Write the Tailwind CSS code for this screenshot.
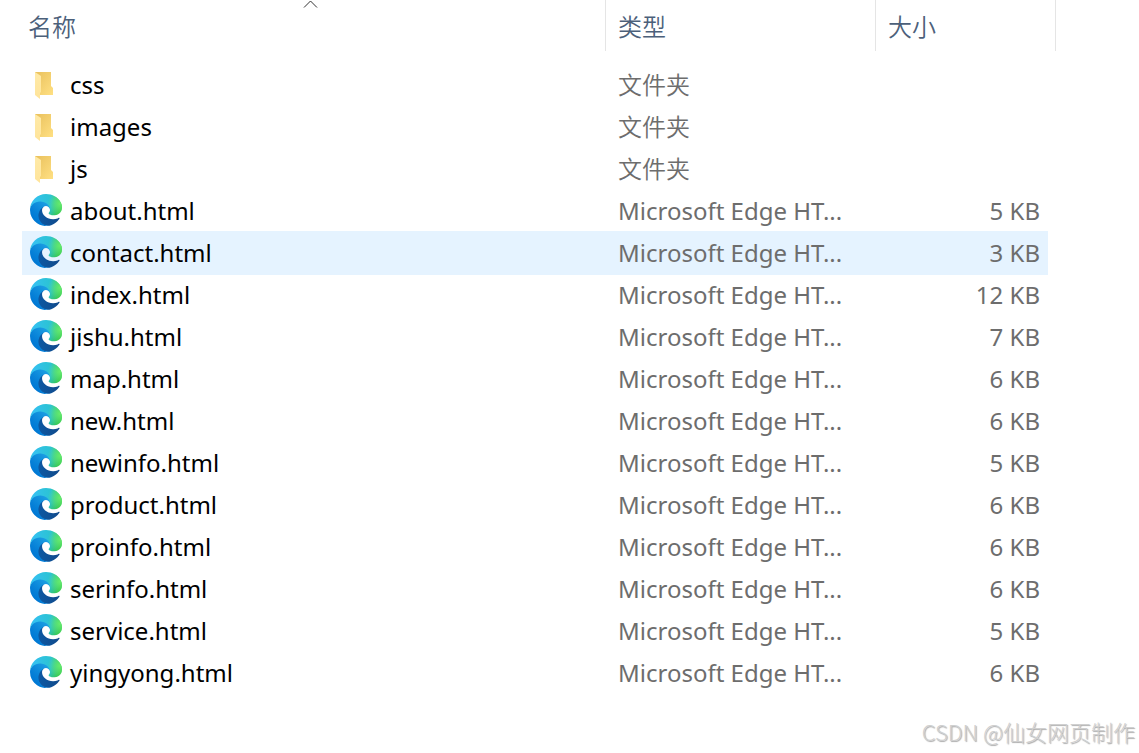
<!DOCTYPE html>
<html lang="zh-Hans">
<head>
    <meta charset="UTF-8">
    <meta name="viewport" content="width=device-width, initial-scale=1.0">
    <title>文件列表</title>
    <script src="https://cdn.jsdelivr.net/npm/@tailwindcss/browser@4"></script>
</head>
<body class="bg-white min-h-screen relative font-['Noto_Sans','Noto_Sans_CJK_SC',sans-serif] text-[24px] leading-[42px] text-[#6d6d6d]">
    <svg class="absolute w-0 h-0" aria-hidden="true">
        <defs>
            <linearGradient id="folderBack" x1="0" y1="0" x2="1" y2="1">
                <stop offset="0" stop-color="#e9c05c"/>
                <stop offset="1" stop-color="#ffe083"/>
            </linearGradient>
            <linearGradient id="folderFront" x1="0" y1="0" x2="0" y2="1">
                <stop offset="0" stop-color="#ffeaa8"/>
                <stop offset="1" stop-color="#ffe49a"/>
            </linearGradient>
            <linearGradient id="edgeDark" x1="63" y1="177" x2="241" y2="177" gradientUnits="userSpaceOnUse">
                <stop offset="0" stop-color="#0c59a4"/>
                <stop offset="1" stop-color="#114a8b"/>
            </linearGradient>
            <linearGradient id="edgeBlue" x1="157" y1="105" x2="46" y2="226" gradientUnits="userSpaceOnUse">
                <stop offset="0" stop-color="#1b9de2"/>
                <stop offset=".16" stop-color="#1595df"/>
                <stop offset=".67" stop-color="#0680d7"/>
                <stop offset="1" stop-color="#0078d4"/>
            </linearGradient>
            <radialGradient id="edgeTeal" cx="0" cy="0" r="1" gradientUnits="userSpaceOnUse" gradientTransform="matrix(225 0 0 225 30 52)">
                <stop offset="0" stop-color="#35c1f1"/>
                <stop offset=".11" stop-color="#34c1ed"/>
                <stop offset=".35" stop-color="#2fc2df"/>
                <stop offset=".65" stop-color="#2bc3d2"/>
                <stop offset="1" stop-color="#36c752"/>
            </radialGradient>
            <radialGradient id="edgeGreen" cx="244" cy="82" r="97" gradientUnits="userSpaceOnUse">
                <stop offset="0" stop-color="#66eb6e"/>
                <stop offset="1" stop-color="#66eb6e" stop-opacity="0"/>
            </radialGradient>
        </defs>
        <symbol id="folder" viewBox="0 0 32 32">
            <path fill="url(#folderBack)" d="M5 4h16v14l2 2v7H5z"/>
            <path fill="url(#folderFront)" d="M5 4l6 4v16l-1 1v6l-5-4z"/>
        </symbol>
        <symbol id="edge" viewBox="4.6 4.9 256 256">
            <path fill="url(#edgeDark)" d="M235.68 195.46a93.73 93.73 0 0 1-10.54 4.71 101.87 101.87 0 0 1-35.9 6.46c-47.32 0-88.54-32.55-88.54-74.32A31.48 31.48 0 0 1 117.13 105c-42.8 1.8-53.8 46.4-53.8 72.53 0 73.88 68.09 81.37 82.76 81.37 7.91 0 19.84-2.3 27-4.56l1.31-.44A128.34 128.34 0 0 0 241 201.1a4 4 0 0 0-5.32-5.64z"/>
            <path fill="url(#edgeBlue)" d="M110.34 246.34A79.2 79.2 0 0 1 87.6 225a80.72 80.72 0 0 1 29.53-120c3.12-1.47 8.45-4.13 15.54-4a32.35 32.35 0 0 1 25.69 13 31.88 31.88 0 0 1 6.36 18.66c0-.21 24.46-79.6-80-79.6-43.9 0-80 41.66-80 78.21a130.15 130.15 0 0 0 12.11 56 128 128 0 0 0 156.38 67.11 75.55 75.55 0 0 1-62.78-8z"/>
            <path fill="url(#edgeTeal)" d="M156.94 153.78c-.81 1.05-3.3 2.5-3.3 5.66 0 2.61 1.7 5.12 4.72 7.23 14.38 10 41.49 8.68 41.56 8.68A59.56 59.56 0 0 0 230.19 167a61.38 61.38 0 0 0 30.43-52.88c.26-22.41-8-37.31-11.34-43.91C228.09 28.76 182.35 4.92 132.61 4.92a128 128 0 0 0-128 126.2c.48-36.54 36.8-66.05 80-66.05 3.5 0 23.46.34 42 10.07 16.34 8.58 24.9 18.94 30.85 29.21 6.18 10.67 7.28 24.15 7.28 29.52S162 147.2 156.94 153.78z"/>
            <path fill="url(#edgeGreen)" d="M156.94 153.78c-.81 1.05-3.3 2.5-3.3 5.66 0 2.61 1.7 5.12 4.72 7.23 14.38 10 41.49 8.68 41.56 8.68A59.56 59.56 0 0 0 230.19 167a61.38 61.38 0 0 0 30.43-52.88c.26-22.41-8-37.31-11.34-43.91C228.09 28.76 182.35 4.92 132.61 4.92a128 128 0 0 0-128 126.2c.48-36.54 36.8-66.05 80-66.05 3.5 0 23.46.34 42 10.07 16.34 8.58 24.9 18.94 30.85 29.21 6.18 10.67 7.28 24.15 7.28 29.52S162 147.2 156.94 153.78z"/>
        </symbol>
    </svg>

    <div class="pl-[22px] pr-[83px]">
        <table class="w-full table-fixed border-separate border-spacing-0">
            <colgroup>
                <col>
                <col class="w-[270px]">
                <col class="w-[173px]">
                <col class="w-2">
            </colgroup>
            <thead class="text-[#4c607a]">
                <tr class="h-[51px]">
                    <th class="relative p-0 pt-0.5 pl-1.5 text-left font-[350]">
                        名称
                        <svg class="absolute top-0 left-1/2 -ml-3 w-4 h-2" viewBox="0 0 16 8" fill="none" stroke="#333"><path d="M2 7.500l6.500-6.500 6.500 6.500"/></svg>
                    </th>
                    <th class="p-0 pt-0.5 pl-3 border-l border-[#e5e5e5] text-left font-[350]">类型</th>
                    <th colspan="2" class="p-0 pt-0.5 pl-3 border-x border-[#e5e5e5] text-left font-[350]">大小</th>
                </tr>
            </thead>
            <tbody id="files" class="before:block before:h-[13px]"></tbody>
        </table>
    </div>

    <div class="absolute right-1 bottom-1.5 text-[22px] leading-8 font-light text-[#d0d0d0] font-['Noto_Sans_CJK_SC',sans-serif] [text-shadow:1px_1px_1px_#aaa]">CSDN @仙女网页制作</div>

    <script>
        const files = [
            ['css'],
            ['images'],
            ['js'],
            ['about.html', 5],
            ['contact.html', 3],
            ['index.html', 12],
            ['jishu.html', 7],
            ['map.html', 6],
            ['new.html', 6],
            ['newinfo.html', 5],
            ['product.html', 6],
            ['proinfo.html', 6],
            ['serinfo.html', 6],
            ['service.html', 5],
            ['yingyong.html', 6]
        ];
        const hovered = 'contact.html';

        document.getElementById('files').innerHTML = files.map(([name, size]) => {
            const bg = name === hovered ? 'bg-[#e5f3ff] shadow-[0_1px_0_#e5f3ff,0_-1px_0_#e5f3ff]' : '';
            return `
            <tr class="h-[42px]">
                <td class="p-0 pl-2 ${bg}">
                    <a href="#" class="flex items-center gap-2 h-[42px] text-black">
                        <svg class="w-8 h-8 shrink-0 -mt-0.5"><use href="#${size ? 'edge' : 'folder'}"/></svg>
                        <span>${name}</span>
                    </a>
                </td>
                <td class="p-0 pl-[13px] ${bg} ${size ? '' : 'font-[350]'}">${size ? 'Microsoft Edge HT...' : '文件夹'}</td>
                <td class="p-0 pr-2 text-right ${bg}">${size ? size + ' KB' : ''}</td>
                <td class="p-0"></td>
            </tr>`;
        }).join('');
    </script>
</body>
</html>
